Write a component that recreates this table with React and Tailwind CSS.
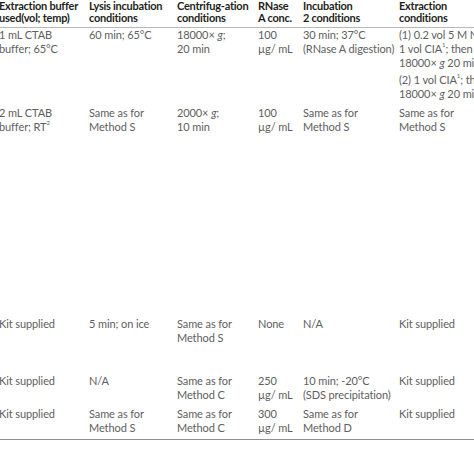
import React from 'react';

const cols = ['w-[90px]', 'w-[88px]', 'w-[81px]', 'w-[45px]', 'w-[96px]', 'flex-1'];

const G = () => <i className="italic">g</i>;
const Sup = ({ children }) => (
  <sup className="text-[6px] relative top-[-1px] align-super">{children}</sup>
);

const header = [
  ['Extraction buffer', 'used(vol; temp)'],
  ['Lysis incubation', 'conditions'],
  ['Centrifug-ation', 'conditions'],
  ['RNase', 'A conc.'],
  ['Incubation', '2 conditions'],
  ['Extraction', 'conditions'],
];

const rows = [
  {
    cls: 'h-[75px]',
    cells: [
      <>1 mL CTAB<br />buffer; 65°C</>,
      <>60 min; 65°C</>,
      <>18000× <G />;<br />20 min</>,
      <>100<br />µg/ mL</>,
      <>30 min; 37°C<br />(RNase A digestion)</>,
      <>
        <div>(1) 0.2 vol 5 M NaCl;<br />1 vol CIA<Sup>1</Sup>; then<br />18000× <G /> 20 min</div>
        <div className="mt-[3px]">(2) 1 vol CIA<Sup>1</Sup>; then<br />18000× <G /> 20 min</div>
      </>,
    ],
  },
  {
    cls: 'h-[211px] pt-[3px]',
    cells: [
      <>2 mL CTAB<br />buffer; RT<Sup>2</Sup></>,
      <>Same as for<br />Method S</>,
      <>2000× <G />;<br />10 min</>,
      <>100<br />µg/ mL</>,
      <>Same as for<br />Method S</>,
      <>Same as for<br />Method S</>,
    ],
  },
  {
    cls: 'h-[57px] pt-[3px]',
    cells: [
      <>Kit supplied</>,
      <>5 min; on ice</>,
      <>Same as for<br />Method S</>,
      <>None</>,
      <>N/A</>,
      <>Kit supplied</>,
    ],
  },
  {
    cls: 'h-[33px] pt-[3px]',
    cells: [
      <>Kit supplied</>,
      <>N/A</>,
      <>Same as for<br />Method C</>,
      <>250<br />µg/ mL</>,
      <>10 min; -20°C<br />(SDS precipitation)</>,
      <>Kit supplied</>,
    ],
  },
  {
    cls: 'h-[33px] pt-[3px]',
    cells: [
      <>Kit supplied</>,
      <>Same as for<br />Method S</>,
      <>Same as for<br />Method C</>,
      <>300<br />µg/ mL</>,
      <>Same as for<br />Method D</>,
      <>Kit supplied</>,
    ],
  },
];

export default function App() {
  return (
    <div className="w-[474px] h-[474px] bg-white overflow-hidden font-['Lato',sans-serif]">
      <div className="ml-[-1px] w-[480px]">
        {/* Header */}
        <div className="flex h-[27px] text-[11px] leading-[12px] font-bold tracking-[-0.25px] text-[#231f20]">
          {header.map((h, i) => (
            <div key={i} className={`${cols[i]} shrink-0 whitespace-nowrap`}>
              {h[0]}<br />{h[1]}
            </div>
          ))}
        </div>
        <div className="h-px bg-[#b8b8b8]"></div>

        {/* Body */}
        {rows.map((r, ri) => (
          <div key={ri} className={`flex text-[11px] leading-[14px] tracking-[-0.1px] text-[#606060] ${r.cls}`}>
            {r.cells.map((c, ci) => (
              <div key={ci} className={`${cols[ci]} shrink-0 whitespace-nowrap`}>
                {c}
              </div>
            ))}
          </div>
        ))}
        <div className="h-px bg-[#8f8f8f] mt-[2px]"></div>
      </div>
    </div>
  );
}
